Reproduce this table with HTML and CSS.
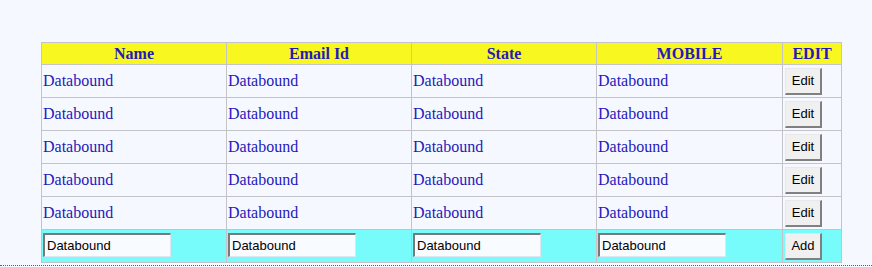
FILE: index.html
```html
<!DOCTYPE html>
<html>
<head>
<meta charset="utf-8">
<link rel="stylesheet" href="styles.css">
</head>
<body>
<div class="page">
  <table class="grid">
    <colgroup>
      <col class="c1"><col class="c2"><col class="c3"><col class="c4"><col class="c5">
    </colgroup>
    <thead>
      <tr class="head"><th>Name</th><th>Email Id</th><th>State</th><th>MOBILE</th><th>EDIT</th></tr>
    </thead>
    <tbody>
      <tr><td>Databound</td><td>Databound</td><td>Databound</td><td>Databound</td><td><button class="btn">Edit</button></td></tr>
      <tr><td>Databound</td><td>Databound</td><td>Databound</td><td>Databound</td><td><button class="btn">Edit</button></td></tr>
      <tr><td>Databound</td><td>Databound</td><td>Databound</td><td>Databound</td><td><button class="btn">Edit</button></td></tr>
      <tr><td>Databound</td><td>Databound</td><td>Databound</td><td>Databound</td><td><button class="btn">Edit</button></td></tr>
      <tr><td>Databound</td><td>Databound</td><td>Databound</td><td>Databound</td><td><button class="btn">Edit</button></td></tr>
      <tr class="add"><td><input class="inp" value="Databound"></td><td><input class="inp" value="Databound"></td><td><input class="inp" value="Databound"></td><td><input class="inp" value="Databound"></td><td><button class="btn">Add</button></td></tr>
    </tbody>
  </table>
</div>
<div class="footer-line"></div>
</body>
</html>
```
FILE: styles.css
```css
html, body {
  margin: 0;
  padding: 0;
  background: #f5f8fe;
}
.page {
  padding: 42px 0 0 41px;
}
.grid {
  border-collapse: collapse;
  width: 800px;
  table-layout: fixed;
  font-family: "Liberation Serif", "Times New Roman", serif;
  font-size: 16px;
  color: #2618bc;
}
.c1, .c2, .c3 { width: 185px; }
.c4 { width: 186px; }
.c5 { width: 59px; }
.grid th, .grid td {
  border: 1px solid #c3c3c8;
  padding: 0 0 0 1px;
  text-align: left;
  vertical-align: middle;
}
.grid th {
  background: #f8f820;
  font-weight: bold;
  text-align: center;
  height: 21px;
  padding: 0;
}
.grid td {
  height: 32px;
}
.add td {
  background: #77fbfb;
}
.btn {
  font-family: "Liberation Sans", Arial, sans-serif;
  font-size: 13px;
  color: #000;
  background: #f0f0f0;
  width: 37px;
  height: 27px;
  padding: 0;
  margin: 0 0 0 1px;
  border-style: solid;
  border-width: 1px 2px 2px 1px;
  border-color: #e8e8e8 #808080 #808080 #e8e8e8;
  display: block;
}
.inp {
  font-family: "Liberation Sans", Arial, sans-serif;
  font-size: 13px;
  color: #000;
  background: #f8fbff;
  width: 123px;
  height: 21px;
  margin: 0 0 2px 0;
  padding: 0 0 0 2px;
  border-style: solid;
  border-width: 2px 1px 1px 2px;
  border-color: #7a7a7a #e0e6f0 #e0e6f0 #7a7a7a;
  display: block;
}
.footer-line {
  margin-top: 2px;
  height: 0;
  border-bottom: 1px dotted #3a5fb8;
}
```
